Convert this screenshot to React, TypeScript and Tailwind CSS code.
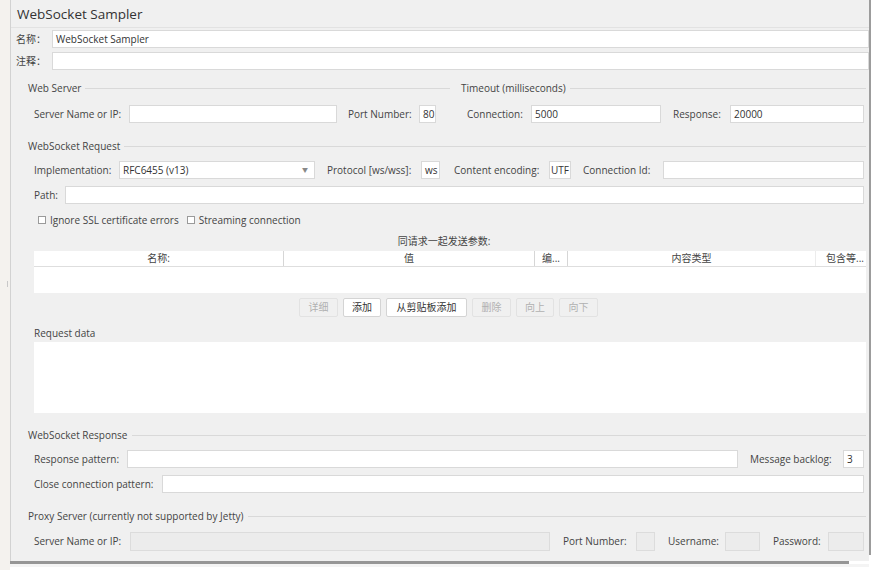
import React from "react";

const inputCls = "h-full bg-white border border-[#d9d9d9] px-[3px] flex items-center text-[#333] overflow-hidden whitespace-nowrap";
const disCls = "h-full bg-[#ececec] border border-[#dcdcdc]";

function Label({ w, children }: { w: string; children: React.ReactNode }) {
  return <span className={`${w} shrink-0 whitespace-nowrap`}>{children}</span>;
}

function Header({ children, className = "" }: { children: React.ReactNode; className?: string }) {
  return (
    <div className={`flex items-center gap-[4px] ${className}`}>
      <span className="whitespace-nowrap text-[#444]">{children}</span>
      <div className="flex-1 h-px bg-[#d9d9d9]" />
    </div>
  );
}

function Btn({ w, children, disabled }: { w: string; children: React.ReactNode; disabled?: boolean }) {
  return (
    <div
      className={`${w} h-full flex items-center justify-center rounded-[2px] border ${
        disabled ? "bg-[#f0f0f0] border-[#e2e2e2] text-[#b0b0b0]" : "bg-white border-[#d4d4d4] text-[#333]"
      }`}
    >
      {children}
    </div>
  );
}

export default function App() {
  return (
    <div className="w-[876px] h-[572px] bg-white flex font-['Open_Sans','Noto_Sans_CJK_SC',sans-serif] text-[10px] text-[#444]">
      <div className="w-[10px] h-[570px] bg-[#f4f2ee] shrink-0 flex flex-col">
        <div className="mt-[281px] ml-[7px] w-px h-[6px] bg-[#c8c8c8]" />
      </div>
      <div className="w-[861px] flex flex-col shrink-0">
        <div className="flex h-[561px]">
          <div className="w-[859px] bg-[#f0f0f0] border-l border-[#d2d2d2] flex flex-col">
            {/* title */}
            <div className="h-[28px] border-b border-[#e2e2e2] flex items-center pl-[6px] pt-[2px] text-[13.5px] text-[#333]">
              WebSocket Sampler
            </div>
            {/* name */}
            <div className="mt-[2px] h-[18px] flex items-center pl-[5px]">
              <Label w="w-[36px]">名称：</Label>
              <div className={`${inputCls} flex-1`}>WebSocket Sampler</div>
            </div>
            <div className="mt-[4px] h-[18px] flex items-center pl-[5px]">
              <Label w="w-[36px]">注释：</Label>
              <div className={`${inputCls} flex-1`} />
            </div>
            {/* web server header */}
            <div className="mt-[10px] h-[16px] flex pl-[17px] pr-[3px] gap-[11px]">
              <Header className="w-[422px]">Web Server</Header>
              <Header className="flex-1">Timeout (milliseconds)</Header>
            </div>
            <div className="mt-[9px] h-[18px] flex items-center pl-[23px]">
              <Label w="w-[95px]">Server Name or IP:</Label>
              <div className={`${inputCls} w-[208px]`} />
              <div className="w-[11px]" />
              <Label w="w-[71px]">Port Number:</Label>
              <div className={`${inputCls} w-[17px]`}>80</div>
              <div className="w-[31px]" />
              <Label w="w-[64px]">Connection:</Label>
              <div className={`${inputCls} w-[130px]`}>5000</div>
              <div className="w-[12px]" />
              <Label w="w-[57px]">Response:</Label>
              <div className={`${inputCls} w-[134px]`}>20000</div>
            </div>
            {/* websocket request */}
            <div className="mt-[15px] h-[16px] flex pl-[17px] pr-[3px]">
              <Header className="flex-1">WebSocket Request</Header>
            </div>
            <div className="mt-[7px] h-[18px] flex items-center pl-[23px]">
              <Label w="w-[85px]">Implementation:</Label>
              <div className={`${inputCls} w-[196px] justify-between`}>
                <span>RFC6455 (v13)</span>
                <span className="text-[6px] text-[#888] pr-[3px]">▼</span>
              </div>
              <div className="w-[12px]" />
              <Label w="w-[94px]">Protocol [ws/wss]:</Label>
              <div className={`${inputCls} w-[19px]`}>ws</div>
              <div className="w-[14px]" />
              <Label w="w-[95px]">Content encoding:</Label>
              <div className={`${inputCls} w-[22px] !px-[1px]`}>UTF</div>
              <div className="w-[12px]" />
              <Label w="w-[80px]">Connection Id:</Label>
              <div className={`${inputCls} w-[201px]`} />
            </div>
            <div className="mt-[7px] h-[18px] flex items-center pl-[23px]">
              <Label w="w-[31px]">Path:</Label>
              <div className={`${inputCls} w-[799px]`} />
            </div>
            <div className="mt-[9px] h-[14px] flex items-center pl-[27px]">
              <div className="w-[8px] h-[8px] border border-[#9a9a9a] bg-white mr-[4px]" />
              <span>Ignore SSL certificate errors</span>
              <div className="w-[8px]" />
              <div className="w-[8px] h-[8px] border border-[#9a9a9a] bg-white mr-[4px]" />
              <span>Streaming connection</span>
            </div>
            <div className="mt-[7px] h-[14px] flex items-center justify-center pl-[8px]">
              同请求一起发送参数:
            </div>
            {/* table */}
            <div className="mt-[3px] ml-[23px] w-[832px] flex flex-col">
              <div className="h-[16px] bg-white border-b border-[#dedede] flex text-[#444]">
                <div className="w-[250px] border-r border-[#d6d6d6] flex items-center justify-center">名称:</div>
                <div className="w-[251px] border-r border-[#d6d6d6] flex items-center justify-center">值</div>
                <div className="w-[33px] border-r border-[#d6d6d6] flex items-center justify-center">编...</div>
                <div className="w-[248px] border-r border-[#ececec] flex items-center justify-center">内容类型</div>
                <div className="flex-1 flex items-center justify-end pr-[2px]">包含等...</div>
              </div>
              <div className="h-[26px] bg-white" />
            </div>
            {/* buttons */}
            <div className="mt-[5px] h-[19px] flex justify-center gap-[5px] pl-[17px]">
              <Btn w="w-[39px]" disabled>详细</Btn>
              <Btn w="w-[38px]">添加</Btn>
              <Btn w="w-[81px]">从剪贴板添加</Btn>
              <Btn w="w-[39px]" disabled>删除</Btn>
              <Btn w="w-[38px]" disabled>向上</Btn>
              <Btn w="w-[39px]" disabled>向下</Btn>
            </div>
            <div className="mt-[9px] h-[14px] flex items-center pl-[23px] text-[#444]">Request data</div>
            <div className="mt-[2px] ml-[23px] w-[832px] h-[71px] bg-white" />
            {/* response */}
            <div className="mt-[14px] h-[16px] flex pl-[17px] pr-[3px]">
              <Header className="flex-1">WebSocket Response</Header>
            </div>
            <div className="mt-[7px] h-[18px] flex items-center pl-[23px]">
              <Label w="w-[93px]">Response pattern:</Label>
              <div className={`${inputCls} w-[611px]`} />
              <div className="w-[12px]" />
              <Label w="w-[93px]">Message backlog:</Label>
              <div className={`${inputCls} w-[21px]`}>3</div>
            </div>
            <div className="mt-[7px] h-[18px] flex items-center pl-[23px]">
              <Label w="w-[128px]">Close connection pattern:</Label>
              <div className={`${inputCls} w-[702px]`} />
            </div>
            {/* proxy */}
            <div className="mt-[15px] h-[16px] flex pl-[17px] pr-[3px]">
              <Header className="flex-1">Proxy Server (currently not supported by Jetty)</Header>
            </div>
            <div className="mt-[8px] h-[19px] flex items-center pl-[23px]">
              <Label w="w-[96px]">Server Name or IP:</Label>
              <div className={`${disCls} w-[420px]`} />
              <div className="w-[13px]" />
              <Label w="w-[73px]">Port Number:</Label>
              <div className={`${disCls} w-[19px]`} />
              <div className="w-[13px]" />
              <Label w="w-[57px]">Username:</Label>
              <div className={`${disCls} w-[35px]`} />
              <div className="w-[13px]" />
              <Label w="w-[55px]">Password:</Label>
              <div className={`${disCls} w-[36px]`} />
            </div>
          </div>
          <div className="w-[2px] flex flex-col">
            <div className="h-[555px] bg-[#9c9c9c]" />
          </div>
        </div>
        <div className="h-[3px] w-[839px] bg-[#969696]" />
        <div className="h-[3px] w-[859px] bg-[#f4f4f4]" />
      </div>
    </div>
  );
}
